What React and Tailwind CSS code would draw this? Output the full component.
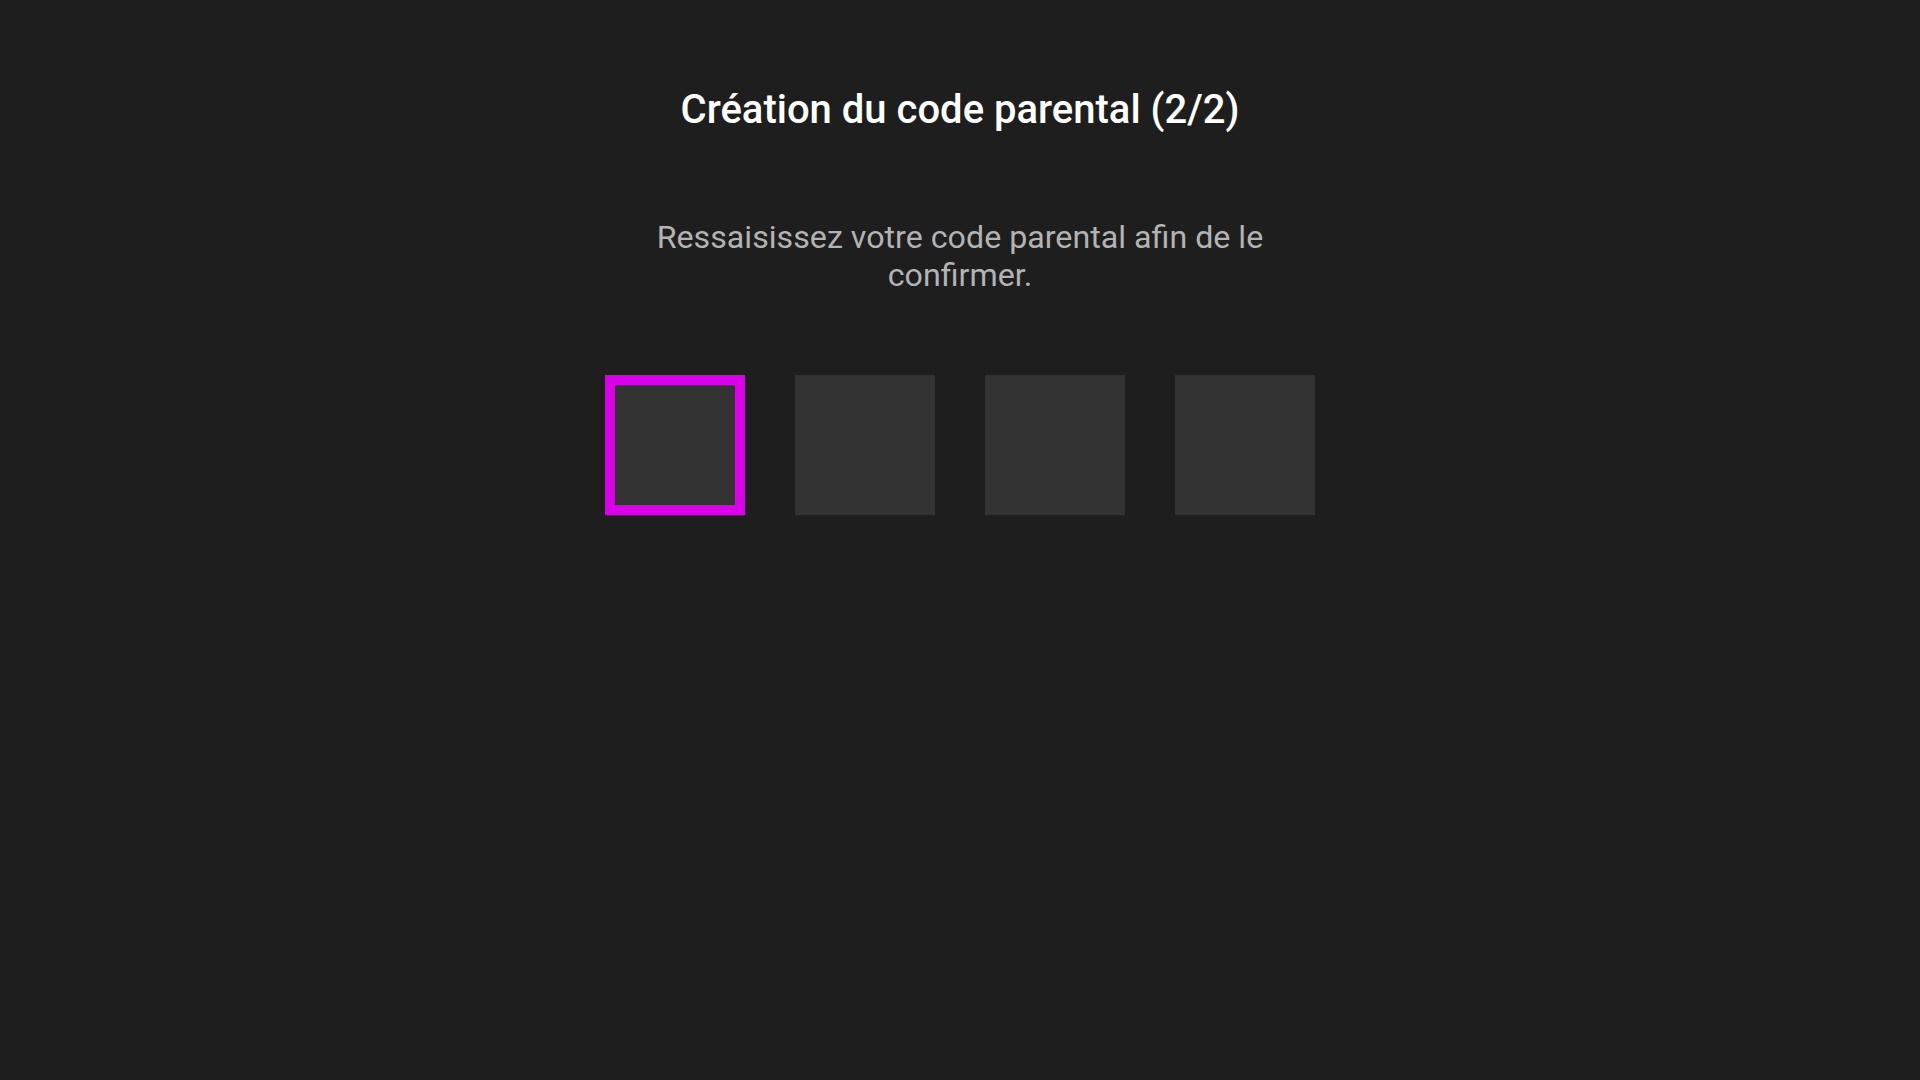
import React from "react";

function PinBox({ active }) {
    return (
        <div
            className={
                active
                    ? "w-[140px] h-[140px] bg-[#333333] border-[10px] border-[#da00ea]"
                    : "w-[140px] h-[140px] bg-[#333333]"
            }
        />
    );
}

function App() {
    const digits = [0, 1, 2, 3];

    return (
        <div className="min-h-screen w-full bg-[#1e1e1e] flex flex-col items-center pt-[86px] font-['Roboto',sans-serif]">
            <h1 className="text-[40px] leading-[48px] font-medium text-white">
                Création du code parental (2/2)
            </h1>

            <p className="mt-[84px] max-w-[640px] text-center text-[32.2px] leading-[38px] text-[#b3b3b3]">
                Ressaisissez votre code parental afin de le confirmer.
            </p>

            {/* code input boxes, first one focused */}
            <div className="mt-[81px] flex gap-[50px]">
                {digits.map((d) => (
                    <PinBox key={d} active={d === 0} />
                ))}
            </div>
        </div>
    );
}

export default App;
